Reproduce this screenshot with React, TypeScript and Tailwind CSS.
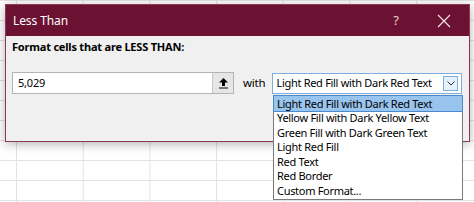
import React from "react";

const options = [
  "Light Red Fill with Dark Red Text",
  "Yellow Fill with Dark Yellow Text",
  "Green Fill with Dark Green Text",
  "Light Red Fill",
  "Red Text",
  "Red Border",
  "Custom Format...",
];

export default function App() {
  return (
    <div
      className="relative w-[474px] h-[202px] overflow-hidden bg-white bg-[linear-gradient(to_right,#e2e2e2_1px,transparent_1px),linear-gradient(to_bottom,#e2e2e2_1px,transparent_1px)] bg-[size:66.7px_20px] bg-[position:16px_0px]"
      style={{ fontFamily: '"Noto Sans", "Open Sans", sans-serif' }}
    >
      {/* dialog window */}
      <div className="absolute left-[5px] top-[4px] w-[465px] h-[138px] flex flex-col bg-[#f0f0f0] border border-[#8a3a55] shadow-[0_2px_10px_rgba(0,0,0,0.3)]">
        {/* title bar */}
        <div className="h-[31px] flex items-center bg-[#6b1131] text-white pl-[7px]">
          <span className="text-[12px] leading-none tracking-[-0.1px]">Less Than</span>
          <span className="ml-auto text-[13px] leading-none mr-[38px] text-[#e8d3da]">?</span>
          <svg width="14" height="14" viewBox="0 0 14 14" className="mr-[18px]">
            <path d="M1 1 L13 13 M13 1 L1 13" stroke="#f3e3e8" strokeWidth="1.2" fill="none" />
          </svg>
        </div>

        {/* body */}
        <div className="flex flex-col px-[6px]">
          <div className="mt-[3px] text-[11px] font-bold leading-[16px] tracking-[-0.2px] text-black">
            Format cells that are LESS THAN:
          </div>

          <div className="flex items-center mt-[17px]">
            <div className="flex w-[222px] h-[22px] bg-white border border-[#b4b4b4]">
              <div className="flex-1 flex items-center pl-[5px] text-[11px] tracking-[-0.2px] text-black">5,029</div>
              <div className="w-[21px] h-full flex items-center justify-center bg-[#e6e6e6] border-l border-[#c8c8c8]">
                <svg width="11" height="12" viewBox="0 0 11 12">
                  <path d="M5.5 1 L10 5.5 L7 5.5 L7 9 L4 9 L4 5.5 L1 5.5 Z" fill="#000" />
                  <rect x="1" y="10.5" width="9" height="1" fill="#000" />
                </svg>
              </div>
            </div>

            <span className="ml-[9px] text-[11.5px] tracking-[-0.2px] text-black">with</span>

            <div className="ml-[7px] flex items-center w-[190px] h-[21px] bg-white border border-[#7eaee0]">
              <span className="flex-1 pl-[3px] text-[11px] tracking-[-0.3px] text-black whitespace-nowrap">
                Light Red Fill with Dark Red Text
              </span>
              <div className="w-[15px] h-[15px] mr-[3px] flex items-center justify-center bg-[#e5f1fb] border border-[#7eaee0]">
                <svg width="8" height="5" viewBox="0 0 8 5">
                  <path d="M0.5 0.5 L4 4 L7.5 0.5" stroke="#333" strokeWidth="1" fill="none" />
                </svg>
              </div>
            </div>
          </div>
        </div>
      </div>

      {/* open dropdown list */}
      <div className="absolute left-[273px] top-[95px] w-[190px] flex flex-col bg-white border border-[#7a7a7a] pb-[1px]">
        {options.map((o, i) => (
          <div
            key={o}
            className={
              i === 0
                ? "h-[14.5px] flex items-center pl-[3px] text-[11px] tracking-[-0.3px] leading-none text-black whitespace-nowrap bg-[#99c4ee] outline outline-1 outline-[#4a8ad0]"
                : "h-[14.5px] flex items-center pl-[3px] text-[11px] tracking-[-0.3px] leading-none text-black whitespace-nowrap"
            }
          >
            {o}
          </div>
        ))}
      </div>
    </div>
  );
}
